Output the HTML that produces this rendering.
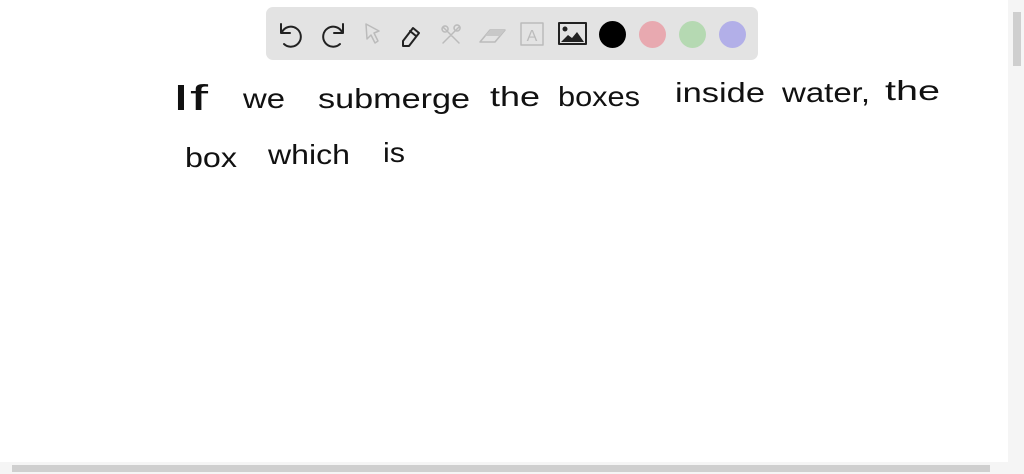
<!DOCTYPE html>
<html><head><meta charset="utf-8"><style>
html,body{margin:0;padding:0;background:#fff;width:1024px;height:474px;overflow:hidden;position:relative;font-family:"Liberation Sans",sans-serif}
.tb{position:absolute;left:266px;top:7px;width:492px;height:53px;background:#e3e3e3;border-radius:7px}
.dot{position:absolute;top:21px;width:27px;height:27px;border-radius:50%}
.vs{position:absolute;left:1008px;top:0;width:16px;height:462px;background:#f5f5f5}
.vt{position:absolute;left:1013px;top:12px;width:8px;height:54px;background:#cfcfcf}
.hs{position:absolute;left:0;top:462px;width:1024px;height:12px;background:#f5f5f5}
.ht{position:absolute;left:12px;top:465px;width:978px;height:7px;background:#cfcfcf}
</style></head><body>
<div class="tb"></div>
<svg width="1024" height="474" style="position:absolute;left:0;top:0" fill="none" stroke-linecap="round" stroke-linejoin="round">
<path d="M281 24 v9 h9 M282 32 a10 10 0 1 1 2 12" stroke="#222" stroke-width="2"/>
<path d="M343 24 v9 h-9 M342 32 a10 10 0 1 0 -2 12" stroke="#222" stroke-width="2"/>
<path d="M366 24 l13 7 -5 2 4 8 -3 2 -4 -8 -4 4 z" stroke="#bbb" stroke-width="1.5"/>
<path d="M403 41 l10 -13 6 5 -10 13 h-6 z M410 31 l6 5" stroke="#222" stroke-width="2"/>
<path d="M443 27 l16 16 M459 27 l-16 16 M445 26 a3 3 0 1 0 0.1 0 M457 25 a3 3 0 1 0 0.1 0" stroke="#bbb" stroke-width="1.5"/>
<path d="M480 42 l10 -12 h15 l-10 12 z M480 42 h15" stroke="#bbb" stroke-width="1.5"/>
<path d="M485 36 l5 -6 h15 l-5 6z" fill="#c8c8c8"/>
<rect x="521" y="23" width="22" height="22" stroke="#bbb" stroke-width="1.5"/>
<text x="532" y="41" font-size="16" fill="#bbb" stroke="none" text-anchor="middle" font-family="Liberation Sans">A</text>
<rect x="559" y="23" width="27" height="21" stroke="#222" stroke-width="2"/>
<circle cx="565" cy="29" r="2.5" fill="#222"/>
<path d="M561 42 l7 -7 4 3 5 -6 7 10 z" fill="#222"/>
</svg>
<div class="dot" style="left:599px;background:#000"></div>
<div class="dot" style="left:639px;background:#e8a9b0"></div>
<div class="dot" style="left:679px;background:#b5d9b2"></div>
<div class="dot" style="left:719px;background:#b2afe8"></div>
<svg width="1024" height="474" style="position:absolute;left:0;top:0" font-family="Liberation Sans" font-size="28" fill="#111">
<text x="172" y="110" font-size="36" textLength="36" lengthAdjust="spacingAndGlyphs">If</text>
<text x="243" y="108" textLength="42" lengthAdjust="spacingAndGlyphs">we</text>
<text x="318" y="108" textLength="152" lengthAdjust="spacingAndGlyphs">submerge</text>
<text x="490" y="106" textLength="50" lengthAdjust="spacingAndGlyphs">the</text>
<text x="558" y="106" textLength="82" lengthAdjust="spacingAndGlyphs">boxes</text>
<text x="675" y="102" textLength="90" lengthAdjust="spacingAndGlyphs">inside</text>
<text x="782" y="102" textLength="88" lengthAdjust="spacingAndGlyphs">water,</text>
<text x="885" y="100" textLength="55" lengthAdjust="spacingAndGlyphs">the</text>
<text x="185" y="167" textLength="52" lengthAdjust="spacingAndGlyphs">box</text>
<text x="268" y="164" textLength="82" lengthAdjust="spacingAndGlyphs">which</text>
<text x="383" y="162" textLength="22" lengthAdjust="spacingAndGlyphs">is</text>
</svg>
<div class="vs"></div><div class="vt"></div>
<div class="hs"></div><div class="ht"></div>
</body></html>
